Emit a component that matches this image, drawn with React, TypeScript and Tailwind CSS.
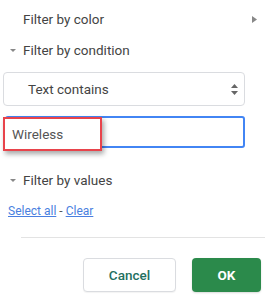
import React from "react";

function Caret() {
  return (
    <svg width="6" height="3" viewBox="0 0 6 3" className="shrink-0">
      <path d="M0 0 L6 0 L3 3 Z" fill="#888" />
    </svg>
  );
}

function SectionHeader({ label }: { label: string }) {
  return (
    <div className="flex h-5 items-center">
      <div className="flex w-[23px] pl-[10px]">
        <Caret />
      </div>
      <span className="text-[13.5px] text-[#444]">{label}</span>
    </div>
  );
}

export default function App() {
  return (
    <div
      className="relative h-[300px] w-[265px] overflow-hidden bg-white pt-[9px]"
      style={{ fontFamily: "Roboto, 'Liberation Sans', sans-serif" }}
    >
      <div className="flex h-5 items-center justify-between pl-[23px] pr-[8px]">
        <span className="text-[13.5px] text-[#444]">Filter by color</span>
        <svg width="5" height="7" viewBox="0 0 5 7">
          <path d="M0 0 L5 3.5 L0 7 Z" fill="#888" />
        </svg>
      </div>

      <div className="mt-[11px]">
        <SectionHeader label="Filter by condition" />
      </div>

      <div className="mt-[12px] ml-[3px] flex h-[34px] w-[242px] items-center justify-between rounded-[4px] border border-[#dadce0] pl-[24px] pr-[6px]">
        <span className="text-[13.5px] text-[#444]">Text contains</span>
        <svg width="7" height="11" viewBox="0 0 7 11">
          <path d="M0 4 L3.5 0 L7 4 Z" fill="#666" />
          <path d="M0 7 L3.5 11 L7 7 Z" fill="#666" />
        </svg>
      </div>

      <div className="relative mt-[10px] ml-[5px] h-[32px] w-[240px] rounded-[3px] border-2 border-[#4285f4]">
        <div className="absolute left-[-4px] top-[-1px] flex h-[34px] w-[99px] items-center border-2 border-[#e8434b] bg-white pl-[7px] shadow-[2px_3px_5px_rgba(0,0,0,0.35)]">
          <span className="text-[13.5px] text-[#555]">Wireless</span>
        </div>
      </div>

      <div className="mt-[22px]">
        <SectionHeader label="Filter by values" />
      </div>

      <div className="mt-[12px] flex h-[18px] items-center pl-[8px] text-[12px]">
        <span className="text-[#4a7fe0] underline">Select all</span>
        <span className="px-[3px] text-[#555]">-</span>
        <span className="text-[#4a7fe0] underline">Clear</span>
      </div>

      <div className="mt-[17px] ml-[21px] h-px bg-[#e3e3e3]" />

      <div className="mt-[20px] flex justify-end gap-[16px] pr-[4px]">
        <button className="h-[34px] w-[93px] rounded-[4px] border border-[#dadce0] bg-white text-[13.5px] font-medium text-[#24705f] shadow-[0_1px_1px_rgba(0,0,0,0.05)]">
          Cancel
        </button>
        <button className="h-[34px] w-[69px] rounded-[4px] bg-[#2b8a4b] text-[13.5px] font-bold text-white shadow-[0_1px_2px_rgba(0,0,0,0.15)]">
          OK
        </button>
      </div>
    </div>
  );
}
